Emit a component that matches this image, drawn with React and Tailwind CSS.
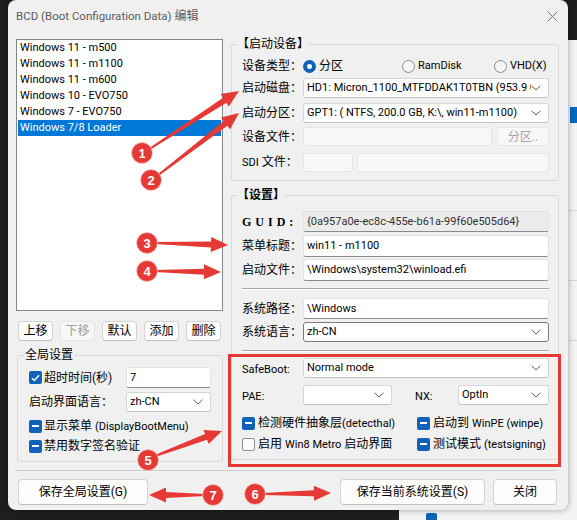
import React from "react";

const Chevron = () => (
  <svg width="10" height="6" viewBox="0 0 10 6" className="shrink-0">
    <path d="M0.5 0.8 L5 5 L9.5 0.8" fill="none" stroke="#5a5a5a" strokeWidth="1" />
  </svg>
);

function Select({ value, className = "", dark = false }) {
  return (
    <div
      className={`flex items-center justify-between bg-white rounded-[3px] border ${
        dark ? "border-[#7a7a7a]" : "border-[#d6d6d6] border-b-[#c2c2c2]"
      } pl-[3px] pr-[7px] overflow-hidden ${className}`}
    >
      <span className="whitespace-nowrap overflow-hidden text-[11px]">{value}</span>
      <Chevron />
    </div>
  );
}

function Input({ value, className = "", gray = false }) {
  return (
    <div
      className={`flex items-center ${
        gray ? "bg-[#ececec]" : "bg-white"
      } border border-[#e2e2e2] border-b-[#8a8a8a] rounded-[3px] px-[3px] whitespace-nowrap overflow-hidden text-[11px] ${className}`}
    >
      {value}
    </div>
  );
}

function Disabled({ className = "", children }) {
  return (
    <div
      className={`flex items-center justify-center bg-[#f8f8f8] border border-[#e6e6e6] rounded-[3px] text-[#a3a3a3] ${className}`}
    >
      {children}
    </div>
  );
}

function Check({ state }) {
  if (state === "off")
    return <span className="w-[13px] h-[13px] rounded-[2px] border border-[#8f8f8f] bg-[#fbfbfb] shrink-0" />;
  return (
    <span className="w-[13px] h-[13px] rounded-[2px] bg-[#0f62b8] flex items-center justify-center shrink-0">
      {state === "mixed" ? (
        <span className="w-[7px] h-[2px] bg-white" />
      ) : (
        <svg width="9" height="8" viewBox="0 0 9 8">
          <path d="M1 4.2 L3.4 6.5 L8 1.3" fill="none" stroke="white" strokeWidth="1.5" />
        </svg>
      )}
    </span>
  );
}

function Radio({ on }) {
  if (on)
    return (
      <span className="w-[13px] h-[13px] rounded-full bg-[#0f62b8] flex items-center justify-center shrink-0">
        <span className="w-[5px] h-[5px] rounded-full bg-white" />
      </span>
    );
  return <span className="w-[13px] h-[13px] rounded-full border border-[#8a8a8a] bg-[#f6f6f6] shrink-0" />;
}

function Btn({ children, className = "", disabled = false }) {
  return (
    <div
      className={`flex items-center justify-center rounded-[4px] border ${
        disabled
          ? "bg-[#f7f7f7] border-[#e6e6e6] text-[#a0a0a0]"
          : "bg-[#fdfdfd] border-[#d3d3d3] border-b-[#bfbfbf] text-black"
      } ${className}`}
    >
      {children}
    </div>
  );
}

function Label({ children, className = "" }) {
  return <span className={`w-[61px] shrink-0 whitespace-nowrap ${className}`}>{children}</span>;
}

const L = ({ children }) => <span className="text-[11px]">{children}</span>;

function arrowPts(x1, y1, x2, y2, hl = 17, hw = 7.5, tw = 1, sw = 3) {
  const dx = x2 - x1;
  const dy = y2 - y1;
  const len = Math.hypot(dx, dy);
  const ux = dx / len;
  const uy = dy / len;
  const nx = -uy;
  const ny = ux;
  const bx = x2 - ux * hl;
  const by = y2 - uy * hl;
  const p = [
    [x1 + nx * tw, y1 + ny * tw],
    [bx + nx * sw, by + ny * sw],
    [bx + nx * hw, by + ny * hw],
    [x2, y2],
    [bx - nx * hw, by - ny * hw],
    [bx - nx * sw, by - ny * sw],
    [x1 - nx * tw, y1 - ny * tw],
  ];
  return p.map((q) => q.map((v) => v.toFixed(1)).join(",")).join(" ");
}

const arrows = [
  [148, 150, 239, 91],
  [157, 176, 239, 113],
  [155, 243, 228, 245],
  [155, 271, 221, 272],
  [155, 456, 222, 431],
  [263, 494, 331, 493],
  [205, 495, 149, 495],
];

const circles = [
  [142, 153, "1"],
  [151, 180, "2"],
  [147, 243, "3"],
  [147, 271, "4"],
  [148, 460, "5"],
  [255, 494, "6"],
  [213, 495, "7"],
];

export default function App() {
  return (
    <div className="relative w-[577px] h-[520px] overflow-hidden bg-[#1e1e1e] font-['Roboto','Noto_Sans_CJK_SC',sans-serif] text-[12px] leading-[16px] text-black">
      {/* background window behind */}
      <div className="absolute left-[399px] top-[40px] right-0 bottom-0 bg-[#f3f3f3]">
        <div className="absolute left-[171px] top-[67px] w-[8px] h-[16px] bg-[#0067c0]" />
        <div className="absolute left-[170px] top-[170px] w-[8px] h-px bg-[#d8d8d8]" />
        <div className="absolute left-[170px] top-[240px] w-[8px] h-px bg-[#d8d8d8]" />
        <div className="absolute left-[170px] top-[300px] w-[8px] h-px bg-[#d8d8d8]" />
        <div className="absolute left-[27px] top-[473px] w-[11px] h-[11px] rounded-[2px] bg-[#0f62b8]" />
      </div>

      {/* dialog window */}
      <div className="absolute left-[8px] top-0 w-[560px] h-[510px] bg-[#f0f0f0] rounded-[8px] flex flex-col shadow-[0_0_6px_rgba(0,0,0,0.35)]">
        {/* title bar */}
        <div className="h-[32px] shrink-0 flex items-center justify-between pl-[8px] pr-[10px]">
          <span className="text-[#5c5c5c] whitespace-nowrap">
            <span className="text-[11.5px]">BCD (Boot Configuration Data) </span>编辑
          </span>
          <svg width="11" height="11" viewBox="0 0 11 11">
            <path d="M0.5 0.5 L10.5 10.5 M10.5 0.5 L0.5 10.5" stroke="#7a7a7a" strokeWidth="1" />
          </svg>
        </div>

        {/* body */}
        <div className="h-[430px] shrink-0 flex items-start">
          {/* left column */}
          <div className="ml-[8px] w-[207px] mt-[7px] flex flex-col">
            <div className="h-[272px] border border-[#828790] bg-white px-[1px] text-[11px]">
              {[
                "Windows 11 - m500",
                "Windows 11 - m1100",
                "Windows 11 - m600",
                "Windows 10 - EVO750",
                "Windows 7 - EVO750",
              ].map((t) => (
                <div key={t} className="h-[16px] leading-[16px] pl-[2px] whitespace-nowrap">
                  {t}
                </div>
              ))}
              <div className="h-[16px] leading-[16px] pl-[2px] bg-[#0078d7] text-white whitespace-nowrap">
                Windows 7/8 Loader
              </div>
            </div>

            <div className="mt-[10px] h-[20px] flex gap-[7px] pl-[2px]">
              <Btn className="w-[35px] h-[20px]">上移</Btn>
              <Btn className="w-[35px] h-[20px]" disabled>
                下移
              </Btn>
              <Btn className="w-[35px] h-[20px]">默认</Btn>
              <Btn className="w-[35px] h-[20px]">添加</Btn>
              <Btn className="w-[35px] h-[20px]">删除</Btn>
            </div>

            <div className="mt-[14px] ml-[1px] w-[206px] h-[107px] border border-[#dadada] rounded-[3px] flex flex-col">
              <div className="-mt-[9px] ml-[6px] h-[16px] px-[1px] w-fit bg-[#f0f0f0]">全局设置</div>
              <div className="pl-[11px] flex flex-col">
                <div className="mt-[4px] h-[21px] flex items-center">
                  <div className="w-[97px] flex items-center gap-[2px]">
                    <Check state="checked" />
                    <span className="whitespace-nowrap">超时时间(秒)</span>
                  </div>
                  <Input value="7" className="w-[85px] h-[21px]" />
                </div>
                <div className="mt-[4px] h-[20px] flex items-center">
                  <span className="w-[97px] whitespace-nowrap">启动界面语言：</span>
                  <Select value="zh-CN" className="w-[85px] h-[20px]" />
                </div>
                <div className="mt-[5px] h-[18px] flex items-center gap-[2px]">
                  <Check state="mixed" />
                  <span className="whitespace-nowrap">
                    显示菜单 <L>(DisplayBootMenu)</L>
                  </span>
                </div>
                <div className="mt-[2px] h-[18px] flex items-center gap-[2px]">
                  <Check state="mixed" />
                  <span className="whitespace-nowrap">禁用数字签名验证</span>
                </div>
              </div>
            </div>
          </div>

          {/* right column */}
          <div className="ml-[8px] w-[328px] mt-[12px] flex flex-col">
            {/* 启动设备 */}
            <div className="h-[137px] border border-[#dadada] rounded-[3px] flex flex-col">
              <div className="-mt-[9px] ml-[5px] h-[16px] w-fit bg-[#f0f0f0]">【启动设备】</div>
              <div className="pl-[10px] pr-[9px] flex flex-col">
                <div className="mt-[4px] h-[20px] flex items-center">
                  <Label>设备类型：</Label>
                  <div className="w-[99px] flex items-center gap-[3px]">
                    <Radio on />
                    <span>分区</span>
                  </div>
                  <div className="w-[92px] flex items-center gap-[3px]">
                    <Radio />
                    <L>RamDisk</L>
                  </div>
                  <div className="flex items-center gap-[3px]">
                    <Radio />
                    <L>VHD(X)</L>
                  </div>
                </div>
                <div className="mt-[2px] h-[20px] flex items-center">
                  <Label>启动磁盘：</Label>
                  <Select value="HD1: Micron_1100_MTFDDAK1T0TBN (953.9 GB)" className="flex-1 h-[20px]" />
                </div>
                <div className="mt-[5px] h-[20px] flex items-center">
                  <Label>启动分区：</Label>
                  <Select value="GPT1: ( NTFS, 200.0 GB, K:\, win11-m1100)" className="flex-1 h-[20px]" />
                </div>
                <div className="mt-[4px] h-[19px] flex items-center">
                  <Label>设备文件：</Label>
                  <Disabled className="w-[189px] h-[19px]" />
                  <Disabled className="ml-[5px] flex-1 h-[19px]">分区..</Disabled>
                </div>
                <div className="mt-[7px] h-[19px] flex items-center">
                  <Label>
                    <L>SDI</L> 文件：
                  </Label>
                  <Disabled className="w-[50px] h-[19px]" />
                  <Disabled className="ml-[4px] flex-1 h-[19px]" />
                </div>
              </div>
            </div>

            {/* 设置 */}
            <div className="mt-[14px] h-[265px] border border-[#dadada] rounded-[3px] flex flex-col">
              <div className="-mt-[9px] ml-[5px] h-[16px] w-fit bg-[#f0f0f0] font-semibold">【设置】</div>
              <div className="pl-[10px] pr-[9px] flex flex-col">
                <div className="mt-[8px] h-[21px] flex items-center">
                  <Label className="font-['Liberation_Serif',serif] font-bold tracking-[4px] text-[12px]">GUID:</Label>
                  <Input gray value="{0a957a0e-ec8c-455e-b61a-99f60e505d64}" className="flex-1 h-[21px] text-[#333]" />
                </div>
                <div className="mt-[3px] h-[22px] flex items-center">
                  <Label>菜单标题：</Label>
                  <Input value="win11 - m1100" className="flex-1 h-[22px]" />
                </div>
                <div className="mt-[2px] h-[22px] flex items-center">
                  <Label>启动文件：</Label>
                  <Input value="\Windows\system32\winload.efi" className="flex-1 h-[22px]" />
                </div>
                <div className="mt-[7px] h-[2px] border-t border-[#a8a8a8] border-b border-b-white" />
                <div className="mt-[8px] h-[21px] flex items-center">
                  <Label>系统路径：</Label>
                  <Input value="\Windows" className="flex-1 h-[21px]" />
                </div>
                <div className="mt-[3px] h-[20px] flex items-center">
                  <Label>系统语言：</Label>
                  <Select dark value="zh-CN" className="flex-1 h-[20px]" />
                </div>
                <div className="mt-[8px] h-[2px] border-t border-[#a8a8a8] border-b border-b-white" />
                <div className="mt-[6px] h-[20px] flex items-center">
                  <Label className="text-[11px] pt-[4px]">SafeBoot:</Label>
                  <Select value="Normal mode" className="flex-1 h-[20px]" />
                </div>
                <div className="mt-[7px] h-[20px] flex items-center">
                  <Label className="text-[11px] pt-[4px]">PAE:</Label>
                  <Select value="" className="w-[89px] h-[20px]" />
                  <span className="ml-[23px] w-[43px] text-[11px] pt-[4px]">NX:</span>
                  <Select value="OptIn" className="flex-1 h-[20px]" />
                </div>
                <div className="mt-[9px] h-[18px] flex items-center">
                  <div className="w-[175px] flex items-center gap-[3px]">
                    <Check state="mixed" />
                    <span className="whitespace-nowrap">
                      检测硬件抽象层<L>(detecthal)</L>
                    </span>
                  </div>
                  <div className="flex items-center gap-[3px]">
                    <Check state="mixed" />
                    <span className="whitespace-nowrap">
                      启动到 <L>WinPE (winpe)</L>
                    </span>
                  </div>
                </div>
                <div className="mt-[3px] h-[18px] flex items-center">
                  <div className="w-[175px] flex items-center gap-[3px]">
                    <Check state="off" />
                    <span className="whitespace-nowrap">
                      启用 <L>Win8 Metro</L> 启动界面
                    </span>
                  </div>
                  <div className="flex items-center gap-[3px]">
                    <Check state="mixed" />
                    <span className="whitespace-nowrap">
                      测试模式 <L>(testsigning)</L>
                    </span>
                  </div>
                </div>
              </div>
            </div>
          </div>
        </div>

        {/* separator */}
        <div className="mt-[8px] ml-[7px] w-[542px] h-px bg-[#cfcfcf]" />

        {/* bottom buttons */}
        <div className="mt-[8px] h-[26px] flex">
          <Btn className="ml-[10px] w-[130px] h-[26px]">保存全局设置(G)</Btn>
          <div className="flex-1" />
          <Btn className="w-[145px] h-[26px]">保存当前系统设置(S)</Btn>
          <Btn className="ml-[8px] mr-[11px] w-[64px] h-[26px]">关闭</Btn>
        </div>
      </div>

      {/* red annotation box */}
      <div className="absolute left-[228px] top-[354px] w-[333px] h-[113px] border-[3px] border-[#e53935] pointer-events-none" />

      {/* annotation arrows & numbers */}
      <svg className="absolute left-0 top-0 pointer-events-none" width="577" height="520" viewBox="0 0 577 520">
        {arrows.map((a, i) => (
          <polygon key={i} points={arrowPts(...a)} fill="#e53935" />
        ))}
        {circles.map(([x, y, t]) => (
          <g key={t}>
            <circle cx={x} cy={y} r="10.5" fill="#e53935" stroke="#f6c9c8" strokeWidth="0.8" />
            <text
              x={x}
              y={y + 4.8}
              textAnchor="middle"
              fontSize="13"
              fontWeight="700"
              fill="white"
              fontFamily="Liberation Sans, Arial, sans-serif"
            >
              {t}
            </text>
          </g>
        ))}
      </svg>
    </div>
  );
}
